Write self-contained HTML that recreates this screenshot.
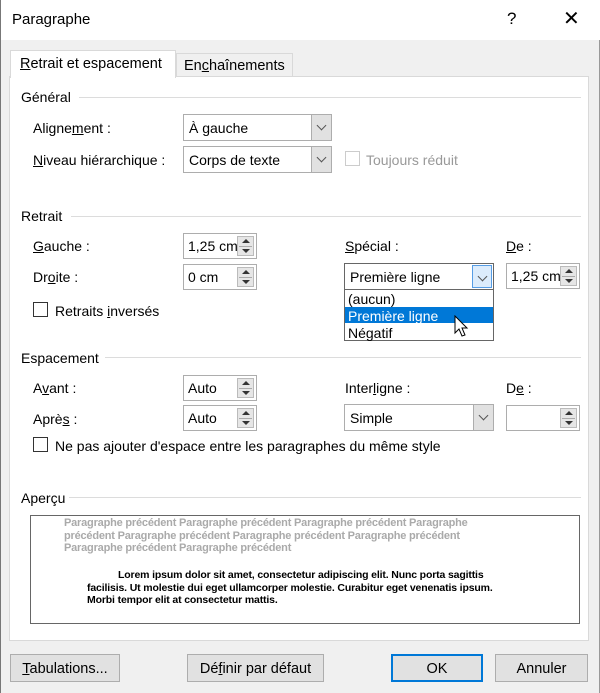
<!DOCTYPE html><html><head><meta charset="utf-8"><style>
*{box-sizing:border-box;margin:0;padding:0}
body{width:600px;height:693px;background:#f0f0f0;font-family:"Liberation Sans","DejaVu Sans",sans-serif;font-size:14px;color:#000;position:relative;overflow:hidden;border-left:1px solid #777;border-right:1px solid #999}
.a{position:absolute;white-space:nowrap}
.title{left:0;top:0;width:600px;height:40px;background:#fff}
.panel{left:8px;top:76px;width:580px;height:565px;background:#fff;border:1px solid #d9d9d9}
.sec{font-size:14px}
.line{height:1px;background:#dcdcdc}
.box{background:#fff;border:1px solid #adadad;height:26px;padding:4px 0 0 4px}
.dd{background:#fff;border:1px solid #adadad;height:27px;padding:5px 0 0 5px}
.arr{position:absolute;right:0;top:0;width:20px;height:100%;background:#e1e1e1;border-left:1px solid #adadad}
.arr:after{content:"";position:absolute;left:6px;top:7px;width:6px;height:6px;border-right:1px solid #555;border-bottom:1px solid #555;transform:rotate(45deg)}
.spin{position:absolute;right:2px;top:2px;width:17px;height:20px;background:#e6e6e6;border:1px solid #bbb}
.spin:before{content:"";position:absolute;left:4px;top:2px;border:4px solid transparent;border-bottom:4px solid #333;border-top:0}
.spin:after{content:"";position:absolute;left:4px;top:12px;border:4px solid transparent;border-top:4px solid #333;border-bottom:0}
.spin i{position:absolute;left:1px;right:1px;top:9px;height:1px;background:#aaa}
.cb{width:15px;height:15px;border:1px solid #333;background:#fff}
.btn{height:28px;background:#e1e1e1;border:1px solid #adadad;text-align:center;padding-top:6px;font-size:14.5px}
u{text-decoration:underline}
</style></head><body>
<div class="a title"></div>
<div class="a" style="left:11px;top:11px;font-size:15px">Paragraphe</div>
<div class="a" style="left:506px;top:9px;font-size:17px">?</div>
<div class="a" style="left:562px;top:6px;font-size:20px;font-weight:300">✕</div>

<div class="a panel"></div>
<div class="a" style="left:9px;top:50px;width:166px;height:28px;background:#fff;border:1px solid #d9d9d9;border-bottom:none"></div>
<div class="a" style="left:19px;top:56px;font-size:14.5px"><u>R</u>etrait et espacement</div>
<div class="a" style="left:175px;top:53px;width:117px;height:23px;background:#f0f0f0;border:1px solid #d9d9d9;border-bottom:none"></div>
<div class="a" style="left:183px;top:58px;font-size:14.5px">En<u>c</u>haînements</div>

<div class="a sec" style="left:20px;top:89px">Général</div><div class="a line" style="left:78px;top:97px;width:502px"></div>
<div class="a" style="left:32px;top:120px">Aligne<u>m</u>ent :</div>
<div class="a dd" style="left:182px;top:114px;width:149px">À gauche<div class="arr"></div></div>
<div class="a" style="left:32px;top:152px"><u>N</u>iveau hiérarchique :</div>
<div class="a dd" style="left:182px;top:146px;width:149px">Corps de texte<div class="arr"></div></div>
<div class="a cb" style="left:344px;top:151px;border-color:#ccc"></div>
<div class="a" style="left:365px;top:152px;color:#999">Toujours réduit</div>

<div class="a sec" style="left:20px;top:208px">Retrait</div><div class="a line" style="left:70px;top:216px;width:510px"></div>
<div class="a" style="left:32px;top:238px"><u>G</u>auche :</div>
<div class="a box" style="left:182px;top:233px;width:74px">1,25 cm<div class="spin"><i></i></div></div>
<div class="a" style="left:32px;top:269px">Dr<u>o</u>ite :</div>
<div class="a box" style="left:182px;top:264px;width:74px">0 cm<div class="spin"><i></i></div></div>
<div class="a cb" style="left:32px;top:302px"></div>
<div class="a" style="left:54px;top:303px">Retraits <u>i</u>nversés</div>
<div class="a" style="left:344px;top:238px"><u>S</u>pécial :</div>
<div class="a" style="left:505px;top:238px"><u>D</u>e :</div>
<div class="a dd" style="left:343px;top:263px;width:150px;border-color:#666">Première ligne<div class="arr" style="background:#dcecfc;border:1px solid #569de5;right:1px;top:1px;height:23px"></div></div>
<div class="a box" style="left:505px;top:263px;width:74px">1,25 cm<div class="spin"><i></i></div></div>
<div class="a" style="left:343px;top:289px;width:150px;height:52px;background:#fff;border:1px solid #666"></div>
<div class="a" style="left:347px;top:291px">(aucun)</div>
<div class="a" style="left:344px;top:307px;width:148px;height:16px;background:#0078d7"></div>
<div class="a" style="left:347px;top:308px;color:#fff">Première ligne</div>
<div class="a" style="left:347px;top:325px">Négatif</div>
<svg class="a" style="left:453px;top:315px" width="16" height="24" viewBox="0 0 16 24"><path d="M1 1 L1 18 L5 14 L8 21 L11 20 L8 13 L13 13 Z" fill="#fff" stroke="#000" stroke-width="1"/></svg>

<div class="a sec" style="left:20px;top:350px">Espacement</div><div class="a line" style="left:104px;top:357px;width:476px"></div>
<div class="a" style="left:32px;top:380px">A<u>v</u>ant :</div>
<div class="a box" style="left:182px;top:375px;width:74px">Auto<div class="spin"><i></i></div></div>
<div class="a" style="left:32px;top:411px">Aprè<u>s</u> :</div>
<div class="a box" style="left:182px;top:405px;width:74px">Auto<div class="spin"><i></i></div></div>
<div class="a" style="left:344px;top:380px">Inter<u>l</u>igne :</div>
<div class="a" style="left:505px;top:380px">D<u>e</u> :</div>
<div class="a dd" style="left:343px;top:404px;width:150px">Simple<div class="arr"></div></div>
<div class="a box" style="left:505px;top:405px;width:74px"><div class="spin"><i></i></div></div>
<div class="a cb" style="left:32px;top:437px"></div>
<div class="a" style="left:54px;top:438px">Ne pas a<u>j</u>outer d'espace entre les paragraphes du même style</div>

<div class="a sec" style="left:20px;top:490px">Aperçu</div><div class="a line" style="left:68px;top:497px;width:512px"></div>
<div class="a" style="left:29px;top:515px;width:550px;height:109px;background:#fff;border:1px solid #666"></div>
<div class="a" style="left:63px;top:517px;font-size:11px;line-height:12.7px;color:#aaa;font-weight:bold;letter-spacing:-0.2px">Paragraphe précédent Paragraphe précédent Paragraphe précédent Paragraphe<br>précédent Paragraphe précédent Paragraphe précédent Paragraphe précédent<br>Paragraphe précédent Paragraphe précédent</div>
<div class="a" style="left:86px;top:569px;font-size:10.5px;line-height:12.5px;color:#000;font-weight:bold;letter-spacing:-0.15px"><span style="padding-left:31px"></span>Lorem ipsum dolor sit amet, consectetur adipiscing elit. Nunc porta sagittis<br>facilisis. Ut molestie dui eget ullamcorper molestie. Curabitur eget venenatis ipsum.<br>Morbi tempor elit at consectetur mattis.</div>

<div class="a btn" style="left:9px;top:654px;width:110px"><u>T</u>abulations...</div>
<div class="a btn" style="left:186px;top:654px;width:137px">Dé<u>f</u>inir par défaut</div>
<div class="a btn" style="left:390px;top:654px;width:92px;border:2px solid #0078d7;padding-top:5px">OK</div>
<div class="a btn" style="left:494px;top:654px;width:93px">Annuler</div>
</body></html>
